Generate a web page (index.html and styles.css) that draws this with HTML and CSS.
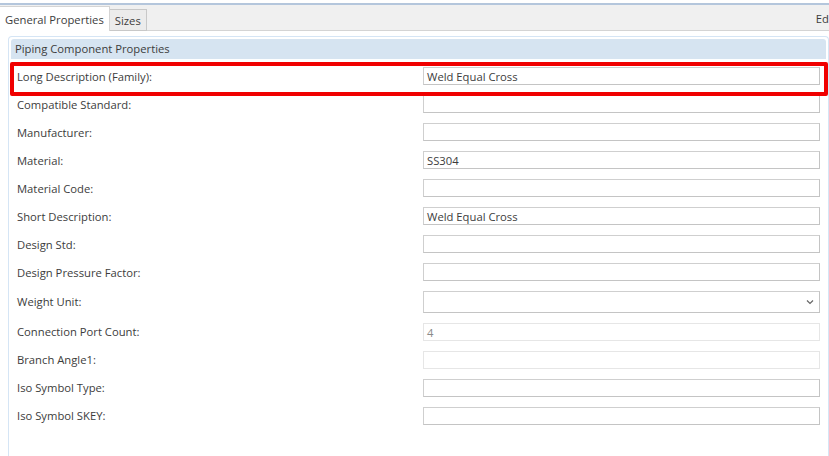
FILE: index.html
```html
<!DOCTYPE html>
<html lang="en">
<head>
    <meta charset="UTF-8">
    <title>Piping Component Properties</title>
    <link rel="stylesheet" href="styles.css">
</head>
<body>

<div class="tabbar">
    <div class="tab active">General Properties</div>
    <div class="tab">Sizes</div>
    <div class="tab-edit">Ed</div>
</div>

<div class="panel">
    <div class="panel-title">Piping Component Properties</div>

    <form class="props">
        <label>Long Description (Family):</label>
        <div class="field">Weld Equal Cross</div>

        <label>Compatible Standard:</label>
        <div class="field"></div>

        <label>Manufacturer:</label>
        <div class="field"></div>

        <label>Material:</label>
        <div class="field">SS304</div>

        <label>Material Code:</label>
        <div class="field"></div>

        <label>Short Description:</label>
        <div class="field">Weld Equal Cross</div>

        <label>Design Std:</label>
        <div class="field"></div>

        <label>Design Pressure Factor:</label>
        <div class="field"></div>

        <label class="raised">Weight Unit:</label>
        <div class="field combo">
            <svg class="chevron" width="8" height="6" viewBox="0 0 8 6">
                <path d="M1 1.5 L4 4.5 L7 1.5" fill="none" stroke="#666" stroke-width="1.2"/>
            </svg>
        </div>

        <label class="raised">Connection Port Count:</label>
        <div class="field disabled">4</div>

        <label class="raised">Branch Angle1:</label>
        <div class="field disabled"></div>

        <label class="raised">Iso Symbol Type:</label>
        <div class="field"></div>

        <label class="raised">Iso Symbol SKEY:</label>
        <div class="field"></div>
    </form>
</div>

<!-- Red highlight around the first row -->
<div class="highlight"></div>

</body>
</html>
```

FILE: styles.css
```css
* {
    margin: 0;
    padding: 0;
    box-sizing: border-box;
}

html, body {
    width: 829px;
    height: 456px;
    overflow: hidden;
}

body {
    position: relative;
    font-family: "Open Sans", "Noto Sans", sans-serif;
    font-size: 11.25px;
    color: #3c3c3c;
    background-color: #fff;
    padding-top: 3px;
}

.tabbar {
    display: flex;
    align-items: flex-end;
    height: 28px;
    background-color: #f0f0f0;
    border-top: 2px solid #b4c6dc;
    border-bottom: 1px solid #d4d4d4;
}

.tab {
    height: 22px;
    line-height: 21px;
    padding: 0 5px;
    margin-bottom: -1px;
    background-color: #ececec;
    border: 1px solid #c8c8c8;
    border-left: none;
}

.tab.active {
    height: 25px;
    line-height: 25px;
    padding: 0 5px 0 5px;
    background-color: #fff;
    border-color: #d4d4d4;
    border-bottom: none;
}

.tab-edit {
    margin-left: auto;
    height: 23px;
    line-height: 23px;
}

.panel {
    margin: 5px 0 0 8px;
    height: 430px;
    padding: 2px;
    border: 1px solid #d5e5f5;
    border-bottom: none;
    border-radius: 4px 4px 0 0;
}

.panel-title {
    height: 20px;
    line-height: 20px;
    padding-left: 4px;
    background-color: #d6e4f1;
    border-radius: 3px 3px 0 0;
}

.props {
    display: grid;
    grid-template-columns: 406px 397px;
    row-gap: 10px;
    padding: 8px 0 0 6px;
    align-items: center;
}

label.raised {
    position: relative;
    top: -1px;
}

.field {
    height: 18px;
    line-height: 18px;
    padding-left: 3px;
    color: #3c3c3c;
    background-color: #fff;
    border: 1px solid #cfcfcf;
    border-bottom-color: #c4c4c4;
    border-right-color: #c4c4c4;
}

.field.combo {
    position: relative;
    height: 22px;
}

.chevron {
    position: absolute;
    right: 5px;
    top: 7px;
}

.field.disabled {
    color: #8a8a8a;
    border-color: #e6e6e6;
}

.highlight {
    position: absolute;
    left: 10px;
    top: 62px;
    width: 818px;
    height: 34px;
    border: 4px solid #f00000;
    border-radius: 2px;
}
```
